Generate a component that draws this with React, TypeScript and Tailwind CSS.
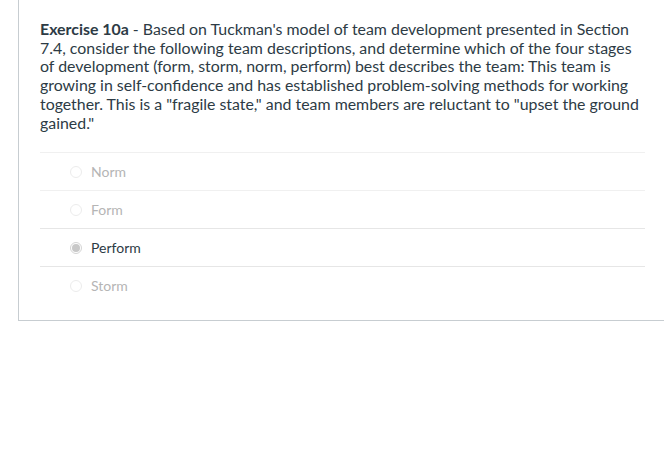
import React from "react";

const options = [
  { label: "Norm", checked: false },
  { label: "Form", checked: false },
  { label: "Perform", checked: true },
  { label: "Storm", checked: false },
];

export default function App() {
  return (
    <div className="w-[664px] h-[459px] bg-white" style={{ fontFamily: "Lato, 'Open Sans', sans-serif" }}>
      <div className="ml-[18px] border-l border-b border-[#c7cdd1] pl-[21px] pr-[19px] pt-[20px] pb-[16px]">
        <p className="text-[15.9px] leading-[18.7px] text-[#2d3b45]">
          <span className="font-bold">Exercise 10a</span> - Based on Tuckman's model of team development presented in Section 7.4, consider the following team descriptions, and determine which of the four stages of development (form, storm, norm, perform) best describes the team: This team is growing in self-confidence and has established problem-solving methods for working together. This is a "fragile state," and team members are reluctant to "upset the ground gained."
        </p>
        <div className="mt-[20px]">
          {options.map((o, i) => (
            <div key={o.label} className={`flex items-center h-[38px] border-t ${i === 2 || i === 3 ? "border-[#e6e6e6]" : "border-[#f0f0f0]"} pl-[30px]`}>
              <span className={`w-[12px] h-[12px] rounded-full border flex items-center justify-center ${o.checked ? "border-[#d4d4d4]" : "border-[#ececec]"}`}>
                {o.checked && <span className="w-[8px] h-[8px] rounded-full bg-[#c8c8c8]" />}
              </span>
              <span className={`ml-[9px] text-[14px] ${o.checked ? "text-[#2d3b45]" : "text-[#b5b5b5]"}`}>{o.label}</span>
            </div>
          ))}
        </div>
      </div>
    </div>
  );
}
